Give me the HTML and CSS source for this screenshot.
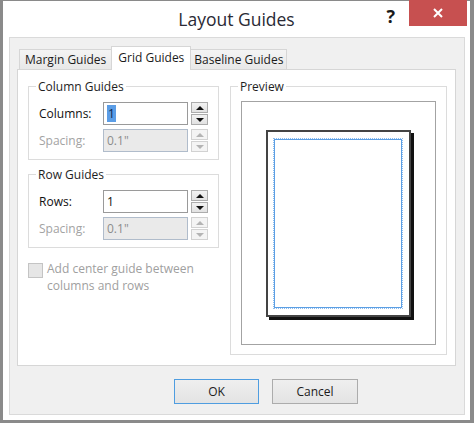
FILE: index.html
```html
<!DOCTYPE html>
<html>
  <head>
    <meta charset="utf-8">
    <title>Layout Guides</title>
    <link rel="stylesheet" href="styles.css">
  </head>
  <body>
    <div class="window">

      <!-- title bar -->
      <div class="titlebar">
        <span></span>
        <h1 class="title">Layout Guides</h1>
        <div class="controls">
          <span class="help">?</span>
          <span class="close">
            <svg width="10" height="10" viewBox="0 0 10 10"><path d="M1 1 L9 9 M9 1 L1 9" stroke="#fff" stroke-width="2" fill="none"/></svg>
          </span>
        </div>
      </div>

      <div class="dialog">
        <div class="tabs">
          <div class="tab">Margin Guides</div>
          <div class="tab active">Grid Guides</div>
          <div class="tab last">Baseline Guides</div>
        </div>

        <div class="panel">
          <div class="left">
            <fieldset class="group">
              <legend>Column Guides</legend>
              <div class="field">
                <label>Columns:</label>
                <div class="input"><span class="sel">1</span></div>
                <div class="spin"><span class="up"></span><span class="down"></span></div>
              </div>
              <div class="field disabled">
                <label>Spacing:</label>
                <div class="input">0.1"</div>
                <div class="spin"><span class="up"></span><span class="down"></span></div>
              </div>
            </fieldset>

            <fieldset class="group rows">
              <legend>Row Guides</legend>
              <div class="field">
                <label>Rows:</label>
                <div class="input">1</div>
                <div class="spin"><span class="up"></span><span class="down"></span></div>
              </div>
              <div class="field disabled">
                <label>Spacing:</label>
                <div class="input">0.1"</div>
                <div class="spin"><span class="up"></span><span class="down"></span></div>
              </div>
            </fieldset>

            <div class="check">
              <span class="box"></span>
              <span class="check-label">Add center guide between columns and rows</span>
            </div>
          </div>

          <fieldset class="group preview">
            <legend>Preview</legend>
            <div class="canvas">
              <div class="page"><div class="guides"></div></div>
            </div>
          </fieldset>
        </div>

        <div class="buttons">
          <button class="btn default">OK</button>
          <button class="btn">Cancel</button>
        </div>
      </div>

    </div>
  </body>
</html>
```

FILE: styles.css
```css
* { box-sizing: border-box; }
body { margin: 0; font-family: "Open Sans", "Noto Sans", sans-serif; font-size: 12px; color: #1b1b1b; }

.window { width: 474px; height: 423px; background: #fff;
     border-style: solid; border-color: #8a8a8a; border-width: 1px 4px 3px 3px; }

/* title bar */
.titlebar { height: 36px; display: grid; grid-template-columns: 1fr auto 1fr; }
.title { margin: 0; padding-top: 4px; font-size: 17.5px; font-weight: normal; line-height: 28px; color: #2a2a35; }
.controls { display: flex; justify-content: flex-end; align-items: flex-start; padding-right: 3px; }
.help { font-size: 18px; font-weight: bold; line-height: 22px; margin-top: 4px; margin-right: 14px; color: #1a1a1a; }
.close { width: 58px; height: 26px; margin-top: -1px; background: #c75050;
     display: flex; align-items: center; justify-content: center; }

/* dialog body */
.dialog { margin: 0 5px 0 6px; height: 378px; background: #f0f0f0; border: 1px solid #dadada;
     padding: 8px 8px 10px 7px; display: flex; flex-direction: column; }

.tabs { display: flex; align-items: flex-end; padding-left: 2px; height: 23px; }
.tab { height: 20px; padding: 1px 5px 0; line-height: 18px; border: 1px solid #d6d6d6; border-bottom: 0;
     background: linear-gradient(#f4f4f4, #e8e8e8); }
.tab + .tab { margin-left: -1px; }
.tab.active { height: 24px; padding-top: 2px; margin-bottom: -1px; background: #fff; position: relative; padding-left: 6px; padding-right: 6px; }
.tab.last { padding-left: 3px; padding-right: 3px; }

.panel { height: 297px; background: #fff; border: 1px solid #d6d6d6; display: flex; padding: 8px 8px 0 10px; }

.left { width: 190px; }

.group { margin: 0; padding: 0 10px 7px; border: 1px solid #dcdcdc; }
.group legend { padding: 0 2px; margin-left: -3px; line-height: 17px; color: #1e1e1e; }
.group.rows { margin-top: 6px; }

.field { display: flex; align-items: center; margin-top: 7px; }
.field + .field { margin-top: 4px; }
.field label { width: 64px; color: #111; }
.input { width: 85px; height: 23px; border: 1px solid #9a9a9a; background: #fff; padding: 0 3px; line-height: 21px; color: #111; }
.sel { background: #5b9de6; color: #0c2650; padding: 0 1px; }
.spin { width: 17px; height: 23px; margin-left: 3px; display: flex; flex-direction: column; justify-content: space-between; }
.spin span { height: 11px; border: 1px solid #acacac; background: linear-gradient(#f2f2f2, #e2e2e2);
     display: flex; align-items: center; justify-content: center; }
.spin .up::after { content: ""; border: 4px solid transparent; border-top: 0; border-bottom: 4px solid #111; }
.spin .down::after { content: ""; border: 4px solid transparent; border-bottom: 0; border-top: 4px solid #111; }

.field.disabled label { color: #a3a3a3; }
.field.disabled .input { background: #eaeaea; border-color: #b0bccb; color: #8c8c8c; }
.field.disabled .spin span { border-color: #d2d2d2; background: #f4f4f4; }
.field.disabled .spin .up::after { border-bottom-color: #b4b4b4; }
.field.disabled .spin .down::after { border-top-color: #b4b4b4; }

.check { display: flex; align-items: flex-start; margin-top: 12px; color: #a0a0a0; line-height: 17px; }
.check .box { flex: none; width: 15px; height: 15px; margin-top: 3px; margin-right: 4px; border: 1px solid #c4c4c4; background: #e6e6e6; }
.check-label { width: 160px; }

.preview { width: 217px; margin-left: 12px; height: 277px; padding-bottom: 9px; }
.canvas { margin-top: 6px; height: 244px; border: 1px solid #a3a3a3; display: flex; align-items: center; justify-content: center; }
.page { width: 145px; height: 187px; border: 2px solid #444; box-shadow: 3px 3px 0 #111; display: flex; padding: 7px 7px 7px 6px; }
.guides { flex: 1; border: 1px solid #5c9fe4; outline: 1px dotted #8dbcee; }

/* buttons */
.buttons { display: flex; gap: 13px; margin-top: 13px; padding-left: 157px; }
.btn { width: 85px; height: 25px; font: inherit; color: #1b1b1b; border: 1px solid #acacac;
     background: linear-gradient(#efefef, #e3e3e3); padding: 0; }
.btn.default { border-color: #4f9de0; }
.btn + .btn { width: 86px; }
```
